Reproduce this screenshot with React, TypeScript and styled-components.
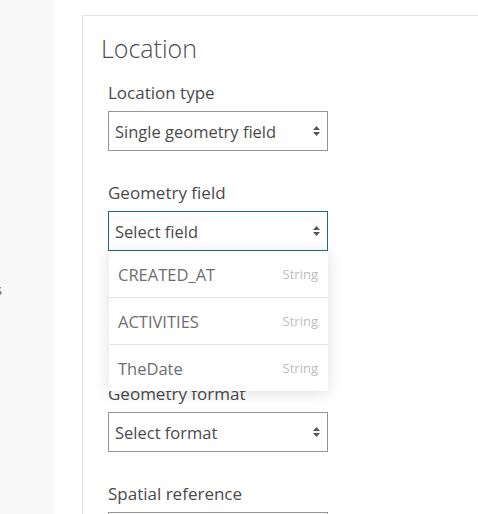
import React from "react";
import styled, { createGlobalStyle } from "styled-components";

const GlobalStyle = createGlobalStyle`
  html, body {
    margin: 0;
    padding: 0;
    background: #ffffff;
    overflow: hidden;
  }
  body {
    font-family: "Open Sans", "Lato", "Liberation Sans", sans-serif;
    color: #4a4a4a;
  }
`;

type FieldOption = { name: string; type: string };

const options: FieldOption[] = [
  { name: "CREATED_AT", type: "String" },
  { name: "ACTIVITIES", type: "String" },
  { name: "TheDate", type: "String" },
];

const Arrows = () => (
  <svg width="9" height="12" viewBox="0 0 9 12">
    <path d="M4.5 1 L8 5 L1 5 Z" fill="#555" />
    <path d="M4.5 11 L8 7 L1 7 Z" fill="#555" />
  </svg>
);

const App: React.FC = () => {
  return (
    <Page>
      <GlobalStyle />
      <Sidebar>
        <SideLabel>Fields</SideLabel>
      </Sidebar>
      <Main>
        <Card>
          <Title>Location</Title>
          <Field>
            <Label>Location type</Label>
            <Select>
              <span>Single geometry field</span>
              <Arrows />
            </Select>
          </Field>
          <Field $after={133}>
            <Label>Geometry field</Label>
            <SelectWrap>
              <Select $focused>
                <span>Select field</span>
                <Arrows />
              </Select>
              <Menu>
                {options.map((o) => (
                  <MenuItem key={o.name}>
                    <span>{o.name}</span>
                    <TypeTag>{o.type}</TypeTag>
                  </MenuItem>
                ))}
              </Menu>
            </SelectWrap>
          </Field>
          <Field>
            <Label>Geometry format</Label>
            <Select>
              <span>Select format</span>
              <Arrows />
            </Select>
          </Field>
          <Field>
            <Label>Spatial reference</Label>
            <Select />
          </Field>
        </Card>
      </Main>
    </Page>
  );
};

export default App;

const Page = styled.div`
  display: flex;
  width: 478px;
  height: 514px;
  overflow: hidden;
`;

const Sidebar = styled.div`
  width: 54px;
  flex-shrink: 0;
  background: #f8f8f8;
  overflow: hidden;
  padding-top: 279px;
  box-sizing: border-box;
`;

const SideLabel = styled.div`
  font-size: 15px;
  line-height: 20px;
  color: #6a6a6a;
  white-space: nowrap;
  margin-left: -38px;
`;

const Main = styled.div`
  flex: 1;
  padding: 15px 0 0 28px;
`;

const Card = styled.div`
  width: 440px;
  border: 1px solid #e4e4e4;
  padding: 16px 18px 0 18px;
  box-sizing: border-box;
  height: 600px;
  background: #fff;
`;

const Title = styled.h2`
  margin: 0 0 19px 0;
  font-size: 25px;
  line-height: 32px;
  font-weight: 300;
  color: #4c4c4c;
`;

const Field = styled.div<{ $after?: number }>`
  padding-left: 7px;
  margin-bottom: ${(p) => p.$after ?? 32}px;
  width: 220px;
`;

const Label = styled.div`
  font-size: 17px;
  line-height: 20px;
  color: #4a4a4a;
  margin-bottom: 8px;
`;

const SelectWrap = styled.div`
  position: relative;
`;

const Select = styled.div<{ $focused?: boolean }>`
  height: 40px;
  box-sizing: border-box;
  border: 1px solid ${(p) => (p.$focused ? "#1f6f73" : "#959595")};
  background: #fff;
  display: flex;
  align-items: center;
  justify-content: space-between;
  padding: 0 6px 0 6px;
  font-size: 16.5px;
  color: #4a4a4a;
`;

const Menu = styled.div`
  position: absolute;
  top: 40px;
  left: 1px;
  right: 0;
  background: #fff;
  box-shadow: 0 2px 14px rgba(0, 0, 0, 0.13);
  z-index: 2;
`;

const MenuItem = styled.div`
  height: 46px;
  display: flex;
  align-items: center;
  justify-content: space-between;
  padding: 0 10px 0 9px;
  font-size: 16.5px;
  color: #6e6e6e;
  & + & {
    border-top: 1px solid #e4e4e4;
  }
`;

const TypeTag = styled.span`
  font-size: 13px;
  color: #bcbcbc;
`;
